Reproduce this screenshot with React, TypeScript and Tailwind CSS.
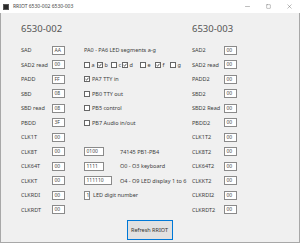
import { Minus, Square, X } from "lucide-react";

const leftRows = [
  ["SAD", "AA"],
  ["SAD2 read", "00"],
  ["PADD", "FF"],
  ["SBD", "08"],
  ["SBD read", "08"],
  ["PBDD", "3F"],
  ["CLK1T", "00"],
  ["CLK8T", "00"],
  ["CLK64T", "00"],
  ["CLKKT", "00"],
  ["CLKRDI", "00"],
  ["CLKRDT", "00"],
];

const rightRows = [
  "SAD2",
  "SAD2 read",
  "PADD2",
  "SBD2",
  "SBD2 Read",
  "PBDD2",
  "CLK1T2",
  "CLK8T2",
  "CLK64T2",
  "CLKKT2",
  "CLKRDI2",
  "CLKRDT2",
];

// segment checkboxes, widths follow the form's placement
const segments = [
  { l: "a", on: false, w: "w-[13px]" },
  { l: "b", on: true, w: "w-[14px]" },
  { l: "c", on: false, w: "w-[11px]" },
  { l: "d", on: true, w: "w-[18px]" },
  { l: "e", on: false, w: "w-[15px]" },
  { l: "f", on: true, w: "w-[15px]" },
  { l: "g", on: false, w: "w-[10px]" },
];

const Box = ({ value, w = "w-[13px]" }: { value: string; w?: string }) => (
  <div className={`${w} h-[9px] bg-white border border-[#8a8a8a] pl-[1.5px] text-[5px] leading-[7px] text-[#444]`}>
    {value}
  </div>
);

const Check = ({ on }: { on: boolean }) => (
  <div className="w-[6px] h-[6px] shrink-0 bg-white border border-[#666] flex items-center justify-center">
    {on && (
      <svg width="4" height="4" viewBox="0 0 8 8" className="shrink-0">
        <path d="M1 4.2 L3.2 6.3 L7 1.5" fill="none" stroke="#333" strokeWidth="1.6" />
      </svg>
    )}
  </div>
);

const Row = ({ children }: { children?: React.ReactNode }) => (
  <div className="h-[14.5px] flex items-center">{children}</div>
);

const CheckLabel = ({ on, label }: { on: boolean; label: string }) => (
  <Row>
    <Check on={on} />
    <span className="ml-[2px]">{label}</span>
  </Row>
);

export default function App() {
  return (
    <div
      className="w-[300px] h-[245px] flex flex-col bg-white text-[#3c3c3c] text-[5.5px]"
      style={{ fontFamily: "'Noto Sans', 'Open Sans', sans-serif" }}
    >
      <div className="h-[13px] flex items-center pl-[3px] bg-white">
        <div className="w-[6px] h-[6px] bg-[#2a2a2a] border border-[#555]" />
        <span className="ml-[4px] text-[5px] text-[#444]">RRIOT 6530-002 6530-003</span>
        <div className="ml-auto flex items-center text-[#444]">
          <div className="w-[21px] flex justify-center"><Minus size={7} strokeWidth={1.2} /></div>
          <div className="w-[21px] flex justify-center"><Square size={5} strokeWidth={1.5} /></div>
          <div className="w-[21px] flex justify-center"><X size={7} strokeWidth={1.2} /></div>
        </div>
      </div>

      <div className="flex-1 bg-[#f0f0f0] border-x border-b border-[#a8a8a8] flex flex-col mb-[2px]">
        <div className="flex pt-[9px]">
          {/* 6530-002 */}
          <div className="w-[83px] pl-[20px]">
            <div className="h-[13px] leading-[13px] text-[9.5px] text-[#555]">6530-002</div>
            <div className="mt-[8px]">
              {leftRows.map(([label, v]) => (
                <Row key={label}>
                  <span className="w-[31px]">{label}</span>
                  <Box value={v} />
                </Row>
              ))}
            </div>
          </div>

          {/* options */}
          <div className="w-[108px]">
            <div className="h-[13px]" />
            <div className="mt-[8px]">
              <Row>PA0 - PA6 LED segments a-g</Row>
              <Row>
                {segments.map((s) => (
                  <div key={s.l} className={`${s.w} shrink-0 flex items-center`}>
                    <Check on={s.on} />
                    <span className="ml-[1.5px]">{s.l}</span>
                  </div>
                ))}
              </Row>
              <CheckLabel on label="PA7 TTY in" />
              <CheckLabel on={false} label="PB0 TTY out" />
              <CheckLabel on={false} label="PB5 control" />
              <CheckLabel on={false} label="PB7 Audio in/out" />
              <Row />
              <Row>
                <Box value="0100" w="w-[20px]" />
                <span className="ml-[16px]">74145 PB1-PB4</span>
              </Row>
              <Row>
                <Box value="1111" w="w-[20px]" />
                <span className="ml-[16px]">O0 - O3 keyboard</span>
              </Row>
              <Row>
                <Box value="111110" w="w-[28px]" />
                <span className="ml-[8px]">O4 - O9 LED display 1 to 6</span>
              </Row>
              <Row>
                <Box value="1" w="w-[6px]" />
                <span className="ml-[3px]">LED digit number</span>
              </Row>
            </div>
          </div>

          {/* 6530-003 */}
          <div className="flex-1">
            <div className="h-[13px] leading-[13px] text-[9.5px] text-[#555]">6530-003</div>
            <div className="mt-[8px]">
              {rightRows.map((label) => (
                <Row key={label}>
                  <span className="w-[32px]">{label}</span>
                  <Box value="00" />
                </Row>
              ))}
            </div>
          </div>
        </div>

        <div className="flex justify-center mt-[3px]">
          <button className="w-[46px] h-[20px] bg-[#e1e1e1] border border-[#0078d7] text-[5.5px] text-[#333] ml-[-1px]">
            Refresh RRIOT
          </button>
        </div>
      </div>
    </div>
  );
}
